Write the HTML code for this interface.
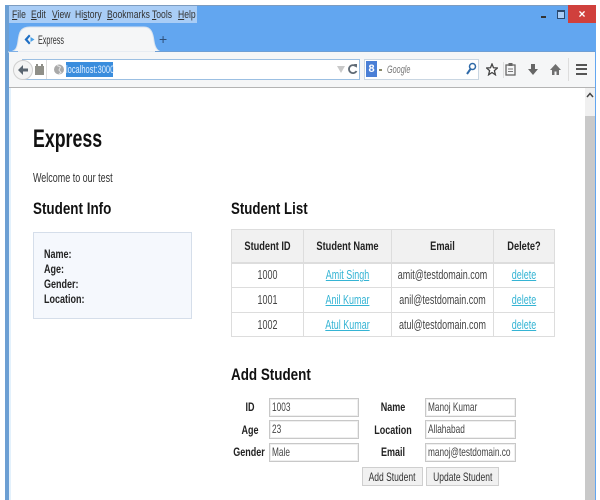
<!DOCTYPE html>
<html><head><meta charset="utf-8">
<style>
html,body{margin:0;padding:0;background:#fff;overflow:hidden}
#r{position:relative;width:600px;height:500px;overflow:hidden;background:#fff;font-family:"Liberation Sans",sans-serif;color:#222}
#r div,#r svg{position:absolute}
.t{white-space:nowrap;transform-origin:0 0}
.m{top:9px;font-size:11px;color:#333;white-space:nowrap;transform:scaleX(.78);transform-origin:0 0}
.m u{text-decoration:underline}
.h{font-weight:bold;color:#111;white-space:nowrap;transform-origin:0 0}
.th{font-weight:bold;font-size:12px;color:#222;text-align:center;top:239px;white-space:nowrap;transform:scaleX(.77);display:flex;justify-content:center}
.c{font-size:13px;color:#444;white-space:nowrap;transform:scaleX(.69);display:flex;justify-content:center}
a.l{color:#35b4d4;text-decoration:underline}
.ln{background:#ddd}
.in{box-sizing:border-box;width:90px;height:19px;border:1px solid #c8c8c8;box-shadow:inset 0 0 0 1px #efefef;background:#fff;font-size:12px;color:#444;padding:1px 0 0 2px;white-space:nowrap;overflow:hidden}
.in span{display:inline-block;transform:scaleX(.69);transform-origin:0 0}
.lb{font-weight:bold;font-size:12px;color:#222;white-space:nowrap;transform:scaleX(.75);display:flex;justify-content:center}
.b{box-sizing:border-box;height:19px;top:467px;border:1px solid #cfcfcf;background:#f1f1f1;font-size:12px;color:#333;padding-top:2px;white-space:nowrap;overflow:hidden;display:flex;justify-content:center}
.b span{display:block;flex:none;transform:scaleX(.71)}
</style></head><body>
<div id="r">
<!-- frame -->
<div style="left:5px;top:5px;width:591px;height:495px;background:#62a6f0"></div>
<div style="left:5px;top:5px;width:591px;height:1px;background:#7d9cc0"></div>
<div style="left:5px;top:5px;width:4px;height:495px;background:#6c9fd3"></div>
<!-- menu -->
<div style="left:9px;top:6px;width:188px;height:17px;background:#a9cdf6"></div>
<div class="m" style="left:12px"><u>F</u>ile</div>
<div class="m" style="left:31px"><u>E</u>dit</div>
<div class="m" style="left:52px"><u>V</u>iew</div>
<div class="m" style="left:75px">Hi<u>s</u>tory</div>
<div class="m" style="left:107px"><u>B</u>ookmarks</div>
<div class="m" style="left:152px"><u>T</u>ools</div>
<div class="m" style="left:178px"><u>H</u>elp</div>
<!-- window controls -->
<div style="left:541px;top:16px;width:5px;height:2px;background:#333"></div>
<div style="left:557px;top:10px;width:6px;height:6px;border:1px solid #2b4a70;border-top-width:2px;background:#a9cdf6"></div>
<div style="left:568px;top:5px;width:28px;height:18px;background:#d0403c"></div>
<div style="left:568px;top:5px;width:28px;height:18px;color:#fff;font-size:12px;font-weight:bold;text-align:center;line-height:18px">×</div>
<!-- tab -->
<svg style="left:8px;top:26px" width="155" height="27" viewBox="0 0 155 27"><path d="M0 26 C7 26 9 23 10 15 C11 7 12 1 22 1 L136 1 C143 1 145 7 146 15 C147 22 150 26 155 26 Z" fill="#f5f6f7" stroke="#d9e3ee"/></svg>
<svg style="left:24px;top:34px" width="11" height="11" viewBox="0 0 11 11"><path d="M5 0.5 L0.5 5.5 L5 10.5 L6.5 9 L3.5 5.5 L6.5 2 Z" fill="#1f6fc4"/><path d="M6.5 3 L10.5 5.5 L6.5 8 Z" fill="#48a0e8"/></svg>
<div class="t" style="left:38px;top:33px;font-size:12px;color:#333;transform:scaleX(.6)">Express</div>
<div style="left:159px;top:31px;font-size:14px;color:#2f4f78;line-height:16px">+</div>
<!-- toolbar -->
<div style="left:9px;top:52px;width:586px;height:35px;background:#f5f6f7"></div>
<div style="left:9px;top:51px;width:9px;height:1px;background:#7fb0e6"></div>
<div style="left:155px;top:51px;width:440px;height:1px;background:#6f9fd4"></div>
<div style="left:9px;top:87px;width:586px;height:1px;background:#b4b4b4"></div>
<!-- urlbar -->
<div style="box-sizing:border-box;left:22px;top:59px;width:338px;height:21px;background:#fff;border:1px solid #9bbfe2"></div>
<div style="box-sizing:border-box;left:13px;top:60px;width:20px;height:20px;border-radius:50%;background:#f4f4f4;border:1px solid #cfcfcf"></div>
<svg style="left:17px;top:64px" width="12" height="12" viewBox="0 0 12 12"><path d="M6 1 L1 6 L6 11 L6 7.5 L11 7.5 L11 4.5 L6 4.5 Z" fill="#5a6570"/></svg>
<svg style="left:34px;top:63px" width="11" height="13" viewBox="0 0 11 13"><rect x="1" y="3" width="9" height="9" fill="#8f8f88"/><rect x="2" y="1" width="2" height="3" fill="#8f8f88"/><rect x="7" y="1" width="2" height="3" fill="#8f8f88"/></svg>
<div style="left:46px;top:60px;width:1px;height:19px;background:#ddd"></div>
<svg style="left:53px;top:63px" width="12" height="13" viewBox="0 0 12 13"><circle cx="6" cy="6.5" r="5" fill="#a9a9a9"/><path d="M4 2.5 L7.5 4 L6 7 L8 9.5 L6 11" fill="none" stroke="#e2e2e2"/></svg>
<div style="left:66px;top:62px;width:47px;height:15px;background:#3a8ddd"></div>
<div class="t" style="left:66px;top:64px;font-size:11px;color:#dfeeff;transform:scaleX(.68)">localhost:3000</div>
<svg style="left:337px;top:66px" width="8" height="7" viewBox="0 0 8 7"><path d="M0 0 H8 L4 7 Z" fill="#c9c9c9"/></svg>
<svg style="left:347px;top:63px" width="11" height="13" viewBox="0 0 11 13"><path d="M9 3.5 A4 4 0 1 0 9.5 8" fill="none" stroke="#5f6a75" stroke-width="1.8"/><path d="M7 1 L10 1 L10 5 Z" fill="#5f6a75"/></svg>
<!-- search -->
<div style="box-sizing:border-box;left:364px;top:59px;width:115px;height:21px;background:#fff;border:1px solid #c9d6e2"></div>
<div style="left:366px;top:61px;width:11px;height:16px;background:#4a7fd6;color:#fff;font-size:11px;font-weight:bold;text-align:center;line-height:16px">8</div>
<div style="left:379px;top:69px;width:3px;height:2px;background:#8a8a6a"></div>
<div class="t" style="left:387px;top:64px;font-size:11px;font-style:italic;color:#777;transform:scaleX(.66)">Google</div>
<svg style="left:465px;top:62px" width="12" height="13" viewBox="0 0 12 13"><circle cx="7.5" cy="4.5" r="3" fill="none" stroke="#2f6aa8" stroke-width="1.5"/><path d="M5.5 7 L2 12" stroke="#2f6aa8" stroke-width="2"/></svg>
<!-- tool icons -->
<svg style="left:486px;top:63px" width="12" height="13" viewBox="0 0 12 13"><path d="M6 1 L7.5 4.8 L11.5 5 L8.4 7.6 L9.4 11.8 L6 9.5 L2.6 11.8 L3.6 7.6 L.5 5 L4.5 4.8 Z" fill="#fff" stroke="#444" stroke-width="1.3"/></svg>
<div style="left:503px;top:62px;width:1px;height:16px;background:#ddd"></div>
<svg style="left:505px;top:63px" width="11" height="13" viewBox="0 0 11 13"><rect x="1" y="2" width="9" height="10" fill="none" stroke="#666" stroke-width="1.3"/><rect x="3.5" y="0" width="4" height="3" fill="#666"/><path d="M3 6 H8 M3 8.5 H8" stroke="#777"/></svg>
<svg style="left:527px;top:63px" width="12" height="13" viewBox="0 0 12 13"><path d="M4 1 H8 V6 H11 L6 12 L1 6 H4 Z" fill="#666"/></svg>
<svg style="left:549px;top:63px" width="13" height="13" viewBox="0 0 13 13"><path d="M6.5 1 L12 7 H10 V12 H7.5 V8.5 H5.5 V12 H3 V7 H1 Z" fill="#6f6f6f"/></svg>
<div style="left:568px;top:58px;width:1px;height:23px;background:#ddd"></div>
<div style="left:576px;top:64px;width:11px;height:2px;background:#555"></div>
<div style="left:576px;top:68px;width:11px;height:2px;background:#555"></div>
<div style="left:576px;top:73px;width:11px;height:2px;background:#555"></div>
<!-- content -->
<div style="left:9px;top:88px;width:576px;height:412px;background:#fff"></div>
<div style="left:9px;top:88px;width:2px;height:412px;background:#e3f1fc"></div>
<div style="left:585px;top:88px;width:10px;height:412px;background:#f0f0f0"></div>
<div style="left:585px;top:116px;width:10px;height:384px;background:#c9c9c9"></div>
<svg style="left:586px;top:92px" width="8" height="6" viewBox="0 0 8 6"><path d="M1 5 L4 1.5 L7 5" fill="none" stroke="#444" stroke-width="1.5"/></svg>
<div class="h" style="left:33px;top:125px;font-size:25px;transform:scaleX(.71)">Express</div>
<div class="t" style="left:33px;top:170px;font-size:13px;color:#333;transform:scaleX(.69)">Welcome to our test</div>
<div class="h" style="left:33px;top:199px;font-size:17px;transform:scaleX(.79)">Student Info</div>
<div class="h" style="left:231px;top:199px;font-size:17px;transform:scaleX(.78)">Student List</div>
<div class="h" style="left:231px;top:365px;font-size:17px;transform:scaleX(.79)">Add Student</div>
<!-- info box -->
<div style="box-sizing:border-box;left:33px;top:232px;width:159px;height:87px;background:#f5f8fd;border:1px solid #d5deea"></div>
<div class="h" style="left:44px;top:247px;font-size:12px;line-height:15px;color:#222;transform:scaleX(.75)">Name:<br>Age:<br>Gender:<br>Location:</div>
<!-- table -->
<div style="box-sizing:border-box;left:231px;top:229px;width:324px;height:108px;border:1px solid #ddd;background:#fff"></div>
<div style="left:232px;top:230px;width:322px;height:33px;background:#f1f1f1"></div>
<div class="ln" style="left:232px;top:262px;width:322px;height:2px"></div>
<div class="ln" style="left:232px;top:287px;width:322px;height:1px"></div>
<div class="ln" style="left:232px;top:312px;width:322px;height:1px"></div>
<div class="ln" style="left:303px;top:230px;width:1px;height:106px"></div>
<div class="ln" style="left:391px;top:230px;width:1px;height:106px"></div>
<div class="ln" style="left:493px;top:230px;width:1px;height:106px"></div>
<div class="th" style="left:232px;width:71px">Student ID</div>
<div class="th" style="left:304px;width:87px">Student Name</div>
<div class="th" style="left:392px;width:101px">Email</div>
<div class="th" style="left:494px;width:60px">Delete?</div>
<div class="c" style="left:232px;width:71px;top:267px">1000</div>
<div class="c" style="left:232px;width:71px;top:292px">1001</div>
<div class="c" style="left:232px;width:71px;top:317px">1002</div>
<div class="c" style="left:304px;width:87px;top:267px"><a class="l">Amit Singh</a></div>
<div class="c" style="left:304px;width:87px;top:292px"><a class="l">Anil Kumar</a></div>
<div class="c" style="left:304px;width:87px;top:317px"><a class="l">Atul Kumar</a></div>
<div class="c" style="left:392px;width:101px;top:267px">amit@testdomain.com</div>
<div class="c" style="left:392px;width:101px;top:292px">anil@testdomain.com</div>
<div class="c" style="left:392px;width:101px;top:317px">atul@testdomain.com</div>
<div class="c" style="left:494px;width:60px;top:267px"><a class="l">delete</a></div>
<div class="c" style="left:494px;width:60px;top:292px"><a class="l">delete</a></div>
<div class="c" style="left:494px;width:60px;top:317px"><a class="l">delete</a></div>
<!-- form -->
<div class="lb" style="left:230px;width:40px;top:400px">ID</div>
<div class="lb" style="left:230px;width:40px;top:423px">Age</div>
<div class="lb" style="left:229px;width:40px;top:445px">Gender</div>
<div class="in" style="left:269px;top:398px"><span>1003</span></div>
<div class="in" style="left:269px;top:420px"><span>23</span></div>
<div class="in" style="left:269px;top:443px"><span>Male</span></div>
<div class="lb" style="left:368px;width:50px;top:400px">Name</div>
<div class="lb" style="left:368px;width:50px;top:423px">Location</div>
<div class="lb" style="left:368px;width:50px;top:445px">Email</div>
<div class="in" style="left:425px;top:398px;width:91px"><span>Manoj Kumar</span></div>
<div class="in" style="left:425px;top:420px;width:91px"><span>Allahabad</span></div>
<div class="in" style="left:425px;top:443px;width:91px"><span>manoj@testdomain.co</span></div>
<div class="b" style="left:362px;width:61px"><span>Add Student</span></div>
<div class="b" style="left:426px;width:73px"><span>Update Student</span></div>
</div>
</body></html>
